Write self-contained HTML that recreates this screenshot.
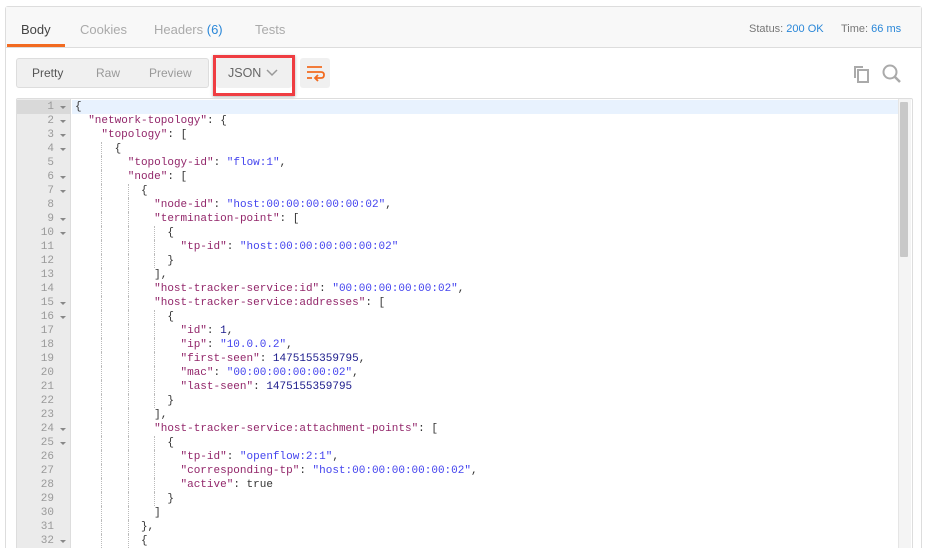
<!DOCTYPE html>
<html><head><meta charset="utf-8"><style>
*{margin:0;padding:0;box-sizing:border-box}
html,body{width:927px;height:548px;overflow:hidden}
body{background:#fff;font-family:"Liberation Sans",sans-serif;position:relative}
.panel{position:absolute;left:5px;top:6px;width:917px;height:560px;border:1px solid #ddd;border-radius:3px;background:#fff}
.tabs{position:absolute;left:0;top:0;width:915px;height:41px;background:#f8f8f8;border-bottom:1px solid #ddd}
.tab{position:absolute;top:15px;font-size:13px;color:#aaa}
.ul{position:absolute;left:1px;top:37px;width:58px;height:3px;background:#f26b21}
.st{position:absolute;top:16px;font-size:11px;color:#777}
.st b{font-weight:normal;color:#2a87d8}
.grp{position:absolute;left:16px;top:58px;width:193px;height:30px;background:#f0f0f0;border:1px solid #ddd;border-radius:3px;font-size:12px}
.grp span{position:absolute;top:7px;color:#999}
.json{position:absolute;left:216px;top:58px;width:76px;height:30px;background:#f0f0f0;border-radius:3px;font-size:12.5px;color:#666}
.red{position:absolute;left:213px;top:55px;width:82px;height:41px;border:3px solid #ef3d42;box-shadow:0 1px 3px rgba(0,0,0,.3)}
.wrap{position:absolute;left:300px;top:58px;width:30px;height:30px;background:#f0f0f0;border-radius:3px}
.code{position:absolute;left:16px;top:98px;width:897px;height:460px;border:1px solid #ddd;border-radius:2px;overflow:hidden;font-family:"Liberation Mono",monospace;font-size:11px}
.gut{position:absolute;left:0;top:0;width:54px;height:100%;background:#ebebeb;border-right:1px solid #ddd}
.ln{position:absolute;left:0;width:54px;height:14px;line-height:14px;color:#999;text-align:right;padding-right:17px}
.ln.f::after{content:"";position:absolute;right:5px;top:6px;border-left:3px solid transparent;border-right:3px solid transparent;border-top:3px solid #888}
.l{position:absolute;left:58px;height:14px;line-height:14px;white-space:pre;color:#333}
.k{color:#92266a}.s{color:#4444ee}.n{color:#1a1a8b}
.i{display:inline-block;width:13.2px;height:14px;vertical-align:top}
.g{border-left:1px dotted #bbb}
.sb{position:absolute;left:883px;top:3px;width:8px;height:155px;background:#c8c8c8;border-radius:1px}
.sbt{position:absolute;left:881px;top:0;width:13px;height:100%;background:#f4f4f4;border-left:1px solid #e5e5e5}
</style></head><body>
<div class="panel">
 <div class="tabs">
  <span class="tab" style="left:15px;color:#444">Body</span>
  <span class="tab" style="left:74px">Cookies</span>
  <span class="tab" style="left:148px">Headers <b style="font-weight:normal;color:#2a87d8">(6)</b></span>
  <span class="tab" style="left:249px">Tests</span>
  <div class="ul"></div>
  <span class="st" style="left:743px">Status: <b>200 OK</b></span>
  <span class="st" style="left:835px">Time: <b>66 ms</b></span>
 </div>
</div>
<div class="grp"><span style="left:15px;color:#555">Pretty</span><span style="left:79px">Raw</span><span style="left:132px">Preview</span></div>
<div class="json"><span style="position:absolute;left:12px;top:8px">JSON</span>
<svg style="position:absolute;left:50px;top:11px" width="12" height="8"><path d="M1 1 L6 6 L11 1" stroke="#999" stroke-width="1.5" fill="none"/></svg></div>
<div class="red"></div>
<div class="wrap"><svg width="30" height="30"><path d="M7 9 H22 M7 14 H21 Q24 14 24 17 Q24 20 21 20 H16 M7 20 H12 M18 17 L15 20 L18 23" stroke="#f26b21" stroke-width="1.8" fill="none"/></svg></div>
<svg style="position:absolute;left:852px;top:64px" width="20" height="20"><path d="M2 2 H11 V4 H4 V14 H2 Z" fill="#aaa"/><rect x="6" y="6" width="10" height="12" fill="none" stroke="#aaa" stroke-width="2"/></svg>
<svg style="position:absolute;left:881px;top:63px" width="22" height="22"><circle cx="9" cy="9" r="6.5" stroke="#aaa" stroke-width="2" fill="none"/><path d="M14 14 L19 19" stroke="#aaa" stroke-width="2.5"/></svg>
<div class="code">
<div style="position:absolute;left:55px;top:1px;width:830px;height:14px;background:#e8f2fe"></div>
<div class="gut"></div>
<div style="position:absolute;left:0;top:1px;width:54px;height:14px;background:#d9d9d9"></div>
<div id="c"></div>
<div class="sbt"></div><div class="sb"></div>
</div>
<script>
var L=[
[0,'{',1],[1,'<k>"network-topology"</k>: {',1],[2,'<k>"topology"</k>: [',1],[3,'{',1],
[4,'<k>"topology-id"</k>: <s>"flow:1"</s>,',0],[4,'<k>"node"</k>: [',1],[5,'{',1],
[6,'<k>"node-id"</k>: <s>"host:00:00:00:00:00:02"</s>,',0],[6,'<k>"termination-point"</k>: [',1],[7,'{',1],
[8,'<k>"tp-id"</k>: <s>"host:00:00:00:00:00:02"</s>',0],[7,'}',0],[6,'],',0],
[6,'<k>"host-tracker-service:id"</k>: <s>"00:00:00:00:00:02"</s>,',0],
[6,'<k>"host-tracker-service:addresses"</k>: [',1],[7,'{',1],
[8,'<k>"id"</k>: <n>1</n>,',0],[8,'<k>"ip"</k>: <s>"10.0.0.2"</s>,',0],[8,'<k>"first-seen"</k>: <n>1475155359795</n>,',0],
[8,'<k>"mac"</k>: <s>"00:00:00:00:00:02"</s>,',0],[8,'<k>"last-seen"</k>: <n>1475155359795</n>',0],[7,'}',0],[6,'],',0],
[6,'<k>"host-tracker-service:attachment-points"</k>: [',1],[7,'{',1],
[8,'<k>"tp-id"</k>: <s>"openflow:2:1"</s>,',0],[8,'<k>"corresponding-tp"</k>: <s>"host:00:00:00:00:00:02"</s>,',0],
[8,'<k>"active"</k>: true',0],[7,'}',0],[6,']',0],[5,'},',0],[5,'{',1]];
var h='';
L.forEach(function(r,i){
 var t=i*14+1;
 h+='<div class="ln'+(r[2]?' f':'')+'" style="top:'+t+'px">'+(i+1)+'</div>';
 var ind='';for(var j=0;j<r[0];j++){ind+='<span class="i'+((j==2||j==4||j==6)?' g':'')+'"></span>';}
 var c=r[1].replace(/<k>/g,'<span class="k">').replace(/<s>/g,'<span class="s">').replace(/<n>/g,'<span class="n">').replace(/<\/[ksn]>/g,'</span>');
 h+='<div class="l" style="top:'+t+'px">'+ind+c+'</div>';
});
document.getElementById('c').innerHTML=h;
</script>
</body></html>
